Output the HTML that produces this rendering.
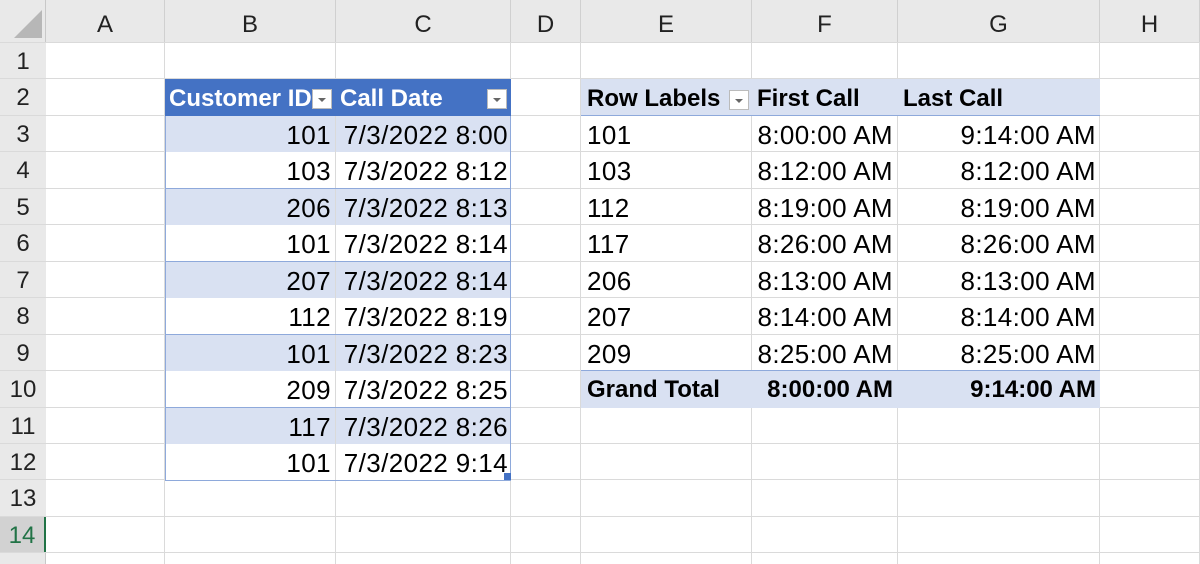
<!DOCTYPE html>
<html><head><style>
body{margin:0;width:1200px;height:564px;overflow:hidden;background:#fff;font-family:"Liberation Sans",sans-serif;position:relative}
div{position:absolute;box-sizing:border-box}
.c{font-size:26px;line-height:36px;white-space:nowrap;color:#000;letter-spacing:0.4px}
.r{text-align:right}
.b{font-weight:bold;font-size:24px;letter-spacing:0}
.hdr{background:#e9e9e9;color:#222;font-size:24px;text-align:center}
.dd{width:20px;height:20px;background:#fff;border:1px solid #bbb}
.dd:after{content:"";position:absolute;left:5px;top:8px;border-left:4px solid transparent;border-right:4px solid transparent;border-top:4px solid #666}
</style></head><body>
<div class="hdr" style="left:0;top:0;width:1200px;height:43px;border-bottom:1px solid #c8c8c8"></div>
<div class="hdr" style="left:0;top:0;width:46px;height:564px;border-right:1px solid #c8c8c8"></div>
<div style="left:14px;top:10px;width:0;height:0;border-left:28px solid transparent;border-bottom:28px solid #b7b7b7"></div>
<div id="g"></div>
<script>
var cols=[46,165,336,511,581,752,898,1100,1200],names="ABCDEFGH";
var h="";
for(var i=0;i<8;i++){h+='<div class="hdr" style="left:'+cols[i]+'px;top:0;width:'+(cols[i+1]-cols[i])+'px;height:43px;line-height:50px;border-right:1px solid #d0d0d0">'+names[i]+'</div>';
 h+='<div style="left:'+(cols[i+1]-1)+'px;top:43px;width:1px;height:521px;background:#dadada"></div>';}
function T(k){return Math.round(43+k*36.45);}
for(var k=0;k<15;k++){var t=T(k);
 h+='<div style="left:0;top:'+(t-1)+'px;width:1200px;height:1px;background:#dadada"></div>';
 if(k<14){var sel=k==13;h+='<div class="hdr" style="left:0;top:'+t+'px;width:46px;height:36px;line-height:38px;'+(sel?'background:#d2d2d2;color:#217346;border-right:2px solid #217346':'')+'">'+(k+1)+'</div>';}}
h+='<div style="left:165px;top:'+T(1)+'px;width:346px;height:37px;background:#4472c4"></div>';
h+='<div class="c b" style="left:169px;top:'+T(1)+'px;color:#fff;line-height:40px">Customer ID</div>';
h+='<div class="c b" style="left:340px;top:'+T(1)+'px;color:#fff;line-height:40px">Call Date</div>';
h+='<div class="dd" style="left:312px;top:'+(T(1)+10)+'px"></div><div class="dd" style="left:487px;top:'+(T(1)+10)+'px"></div>';
var ids=[101,103,206,101,207,112,101,209,117,101],tm=["8:00","8:12","8:13","8:14","8:14","8:19","8:23","8:25","8:26","9:14"];
for(var j=0;j<10;j++){var t=T(j+2);
 h+='<div style="left:165px;top:'+t+'px;width:346px;height:37px;background:'+(j%2==0?'#d9e1f2':'#fff')+';border-bottom:1px solid #8ea9db;border-left:1px solid #8ea9db;border-right:1px solid #8ea9db"></div>';
 h+='<div style="left:335px;top:'+t+'px;width:1px;height:36px;background:#dadada"></div>';
 h+='<div class="c r" style="left:165px;width:166px;top:'+(t+1)+'px">'+ids[j]+'</div>';
 h+='<div class="c r" style="left:336px;width:172px;top:'+(t+1)+'px">7/3/2022 '+tm[j]+'</div>';}
h+='<div style="left:504px;top:'+(T(12)-7)+'px;width:7px;height:7px;background:#4472c4"></div>';
h+='<div style="left:581px;top:'+T(1)+'px;width:519px;height:37px;background:#d9e1f2;border-bottom:1px solid #8ea9db"></div>';
h+='<div class="c b" style="left:587px;top:'+T(1)+'px;line-height:40px">Row Labels</div>';
h+='<div class="dd" style="left:729px;top:'+(T(1)+11)+'px"></div>';
h+='<div class="c b" style="left:757px;top:'+T(1)+'px;line-height:40px">First Call</div>';
h+='<div class="c b" style="left:903px;top:'+T(1)+'px;line-height:40px">Last Call</div>';
var pr=[["101","8:00:00 AM","9:14:00 AM"],["103","8:12:00 AM","8:12:00 AM"],["112","8:19:00 AM","8:19:00 AM"],["117","8:26:00 AM","8:26:00 AM"],["206","8:13:00 AM","8:13:00 AM"],["207","8:14:00 AM","8:14:00 AM"],["209","8:25:00 AM","8:25:00 AM"]];
for(var j=0;j<7;j++){var t=T(j+2)+1;
 h+='<div class="c" style="left:587px;top:'+t+'px">'+pr[j][0]+'</div>';
 h+='<div class="c r" style="left:752px;width:141px;top:'+t+'px">'+pr[j][1]+'</div>';
 h+='<div class="c r" style="left:898px;width:198px;top:'+t+'px">'+pr[j][2]+'</div>';}
var t=T(9);
h+='<div style="left:581px;top:'+(t-1)+'px;width:519px;height:38px;background:#d9e1f2;border-top:1px solid #8ea9db"></div>';
h+='<div class="c b" style="left:587px;top:'+(t+1)+'px">Grand Total</div>';
h+='<div class="c r b" style="left:752px;width:141px;top:'+(t+1)+'px">8:00:00 AM</div>';
h+='<div class="c r b" style="left:898px;width:198px;top:'+(t+1)+'px">9:14:00 AM</div>';
document.getElementById('g').outerHTML=h;
</script>
</body></html>
